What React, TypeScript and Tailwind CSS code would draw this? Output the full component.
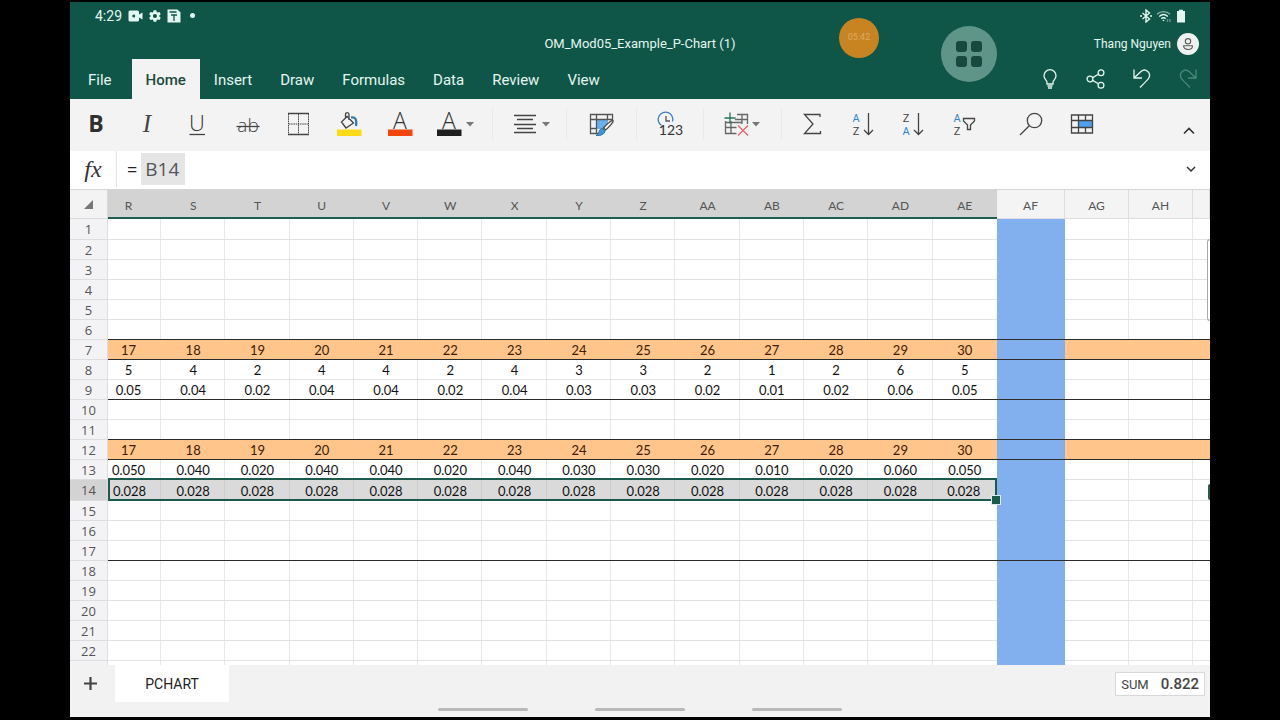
import type { ReactNode } from "react";
import { useState } from "react";

const TABS = ["File", "Home", "Insert", "Draw", "Formulas", "Data", "Review", "View"];

const COLUMNS = [
  "R", "S", "T", "U", "V", "W", "X", "Y", "Z",
  "AA", "AB", "AC", "AD", "AE", "AF", "AG", "AH", "",
];

const ROWS = Array.from({ length: 22 }, (_, i) => i + 1);

const SAMPLES = ["17", "18", "19", "20", "21", "22", "23", "24", "25", "26", "27", "28", "29", "30"];

const DATA: Record<number, string[]> = {
  7: SAMPLES,
  8: ["5", "4", "2", "4", "4", "2", "4", "3", "3", "2", "1", "2", "6", "5"],
  9: ["0.05", "0.04", "0.02", "0.04", "0.04", "0.02", "0.04", "0.03", "0.03", "0.02", "0.01", "0.02", "0.06", "0.05"],
  12: SAMPLES,
  13: ["0.050", "0.040", "0.020", "0.040", "0.040", "0.020", "0.040", "0.030", "0.030", "0.020", "0.010", "0.020", "0.060", "0.050"],
  14: SAMPLES.map(() => "0.028"),
};

const LAST_SELECTED = 13;
const BLUE_COL = 14;
const ACTIVE_ROW = 14;
const RULED_ROWS = [6, 7, 9, 11, 12, 17];
const BANDED_ROWS = [7, 12];
const TALL_ROWS = [1, 14];

function cellClass(row: number, col: number) {
  const selected = col <= LAST_SELECTED;
  const banded = BANDED_ROWS.includes(row);
  const inSelection = row === ACTIVE_ROW && selected;
  const classes = ["relative text-center"];

  if (col === BLUE_COL) classes.push("bg-[#82afed]");
  else if (banded) classes.push("bg-[#ffc58b] text-[#3d1a00]");
  else if (inSelection) classes.push("bg-[#dadada]");
  else classes.push("bg-white");

  if (selected && (row === ACTIVE_ROW || row === ACTIVE_ROW - 1)) {
    classes.push("border-b-2 border-b-[#1b5a4c] pt-0.5");
  } else if (RULED_ROWS.includes(row)) classes.push("border-b border-b-[#2b2b2b]");
  else if (col === BLUE_COL) classes.push("border-b border-b-[#82afed]");
  else classes.push("border-b border-b-[#e2e2e4]");

  // vertical grid lines are shadows so that they never notch the row rules
  const lastBeforeBlue = col === BLUE_COL - 1;
  if (inSelection && !lastBeforeBlue) classes.push("shadow-[inset_-1px_0_0_#cdcdcf]");
  else if (!banded && !lastBeforeBlue && col !== BLUE_COL && col < 17) classes.push("shadow-[inset_-1px_0_0_#e8e8ea]");

  if (row === ACTIVE_ROW && col === 0) classes.push("border-l-2 border-l-[#1b5a4c]");
  if (row === ACTIVE_ROW && lastBeforeBlue) classes.push("border-r-2 border-r-[#1b5a4c]");

  classes.push(col === 0 ? "pr-3" : "");
  return classes.join(" ");
}

function Icon({ children, className = "h-6 w-6" }: { children: ReactNode; className?: string }) {
  return (
    <svg
      viewBox="0 0 24 24"
      className={`${className} shrink-0 overflow-visible`}
      fill="none"
      stroke="currentColor"
      strokeWidth="1.3"
      aria-hidden="true"
    >
      {children}
    </svg>
  );
}

function Caret() {
  return (
    <svg viewBox="0 0 8 5" className="h-[5px] w-2 shrink-0" fill="#777" aria-hidden="true">
      <path d="M0 0h8L4 4.6z" />
    </svg>
  );
}

function Tool({ label, children }: { label: string; children: ReactNode }) {
  return (
    <button type="button" aria-label={label} className="flex h-full w-full items-center justify-center">
      {children}
    </button>
  );
}

function Letter({ x, y, size, color, weight = 400, family = "'Open Sans', 'Noto Sans', sans-serif", children }: {
  x: number; y: number; size: number; color: string; weight?: number; family?: string; children: string;
}) {
  return (
    <text
      x={x}
      y={y}
      fontSize={size}
      fontWeight={weight}
      fill={color}
      stroke="none"
      textAnchor="middle"
      fontFamily={family}
    >
      {children}
    </text>
  );
}

function SortLetters({ top, bottom }: { top: string; bottom: string }) {
  return (
    <>
      <Letter x={5} y={9.5} size={11} color={top === "A" ? "#2f86c9" : "#444"} family="Roboto, sans-serif">{top}</Letter>
      <Letter x={5} y={22.5} size={11} color={bottom === "A" ? "#2f86c9" : "#444"} family="Roboto, sans-serif">{bottom}</Letter>
    </>
  );
}

function StatusBar() {
  return (
    <div className="flex h-[27px] items-center justify-between pl-[25px] pr-6 text-[#e3f6ef]">
      <div className="flex items-center gap-[5px]">
        <span className="text-sm">4:29</span>
        <svg viewBox="0 0 15 12" className="ml-px h-3 w-[15px]" aria-hidden="true">
          <path fill="currentColor" fillRule="evenodd" d="M2 .5h7.500A1.500 1.500 0 0 1 11 2v2.500L14.500 2.500v7L11 7.500V10a1.500 1.500 0 0 1-1.500 1.500H2A1.500 1.500 0 0 1 .5 10V2A1.500 1.500 0 0 1 2 .5zm3.700 4a1.500 1.500 0 1 0 .01 3 1.500 1.500 0 0 0-.01-3z" />
        </svg>
        <svg viewBox="0 0 24 24" className="h-[14px] w-[14px]" fill="currentColor" aria-hidden="true">
          <path fillRule="evenodd" d="M19.400 13c.1-.7.1-1.300 0-2l2.100-1.600c.2-.2.3-.4.1-.7l-2-3.400c-.1-.2-.4-.3-.6-.2l-2.500 1c-.5-.4-1.100-.7-1.700-1L14.400 2.400c0-.2-.2-.4-.5-.4h-4c-.2 0-.4.2-.5.4L9 5.100c-.6.2-1.200.6-1.700 1l-2.500-1c-.2-.1-.5 0-.6.2l-2 3.400c-.1.2-.1.5.1.7L4.400 11c-.1.7-.1 1.300 0 2l-2.100 1.600c-.2.2-.2.4-.1.7l2 3.400c.1.2.4.3.6.2l2.500-1c.5.4 1.100.7 1.700 1l.4 2.700c.1.2.3.4.5.4h4c.3 0 .5-.2.5-.4l.4-2.700c.6-.2 1.200-.6 1.700-1l2.500 1c.2.1.5 0 .6-.2l2-3.400c.1-.2.1-.5-.1-.7zM11.900 15.600a3.600 3.600 0 1 1 0-7.200 3.600 3.600 0 0 1 0 7.200z" />
        </svg>
        <svg viewBox="0 0 14 14" className="h-[14px] w-[14px]" aria-hidden="true">
          <path fill="currentColor" d="M.5.5h10l3 3v10H.5z" />
          <path stroke="#0f5648" strokeWidth="1.300" fill="none" d="M2.500 3h7M7 6v6M4 6h6" />
        </svg>
        <span className="ml-1 h-[5px] w-[5px] rounded-full bg-current" />
      </div>
      <div className="flex items-center gap-1">
        <svg viewBox="0 0 12 14" className="h-[14px] w-3" fill="none" stroke="currentColor" strokeWidth="1.400" aria-hidden="true">
          <path d="M2.500 4l7 6L6 13V1l3.500 3-7 6" />
          <path d="M0 7h2M10 7h2" />
        </svg>
        <svg viewBox="0 0 16 14" className="h-[14px] w-4" fill="none" stroke="currentColor" strokeWidth="1.400" aria-hidden="true">
          <path opacity=".6" d="M1 5.200c3.800-3.500 9.200-3.500 13 0" />
          <path d="M3.200 7.400c2.600-2.300 6-2.300 8.600 0M5.300 9.600c1.400-1.200 3-1.200 4.400 0" />
          <circle cx="7.500" cy="11.500" r=".8" fill="currentColor" stroke="none" />
          <path opacity=".4" d="M11.500 10v3M14 10v3" />
        </svg>
        <svg viewBox="0 0 10 14" className="h-[14px] w-[10px]" fill="currentColor" aria-hidden="true">
          <path d="M3 .8h4V2h2v11.500H1V2h2z" />
        </svg>
      </div>
    </div>
  );
}

function Header() {
  const [active, setActive] = useState("Home");
  return (
    <header className="relative bg-[#0f5648] text-[#e3f6ef]">
      <StatusBar />
      <div className="grid h-[30px] grid-cols-[1fr_auto_1fr] items-center">
        <span />
        <h1 className="text-[13px]">OM_Mod05_Example_P-Chart (1)</h1>
        <button type="button" className="mr-[11px] flex items-center gap-[6px] justify-self-end text-xs">
          Thang Nguyen
          <span className="flex h-[22px] w-[22px] items-center justify-center rounded-full bg-[#eef1ef] text-[#5c5c5c]">
            <svg viewBox="0 0 14 14" className="h-[14px] w-[14px]" fill="none" stroke="currentColor" strokeWidth="1.100" aria-hidden="true">
              <circle cx="7" cy="4.300" r="2.700" />
              <path d="M2.500 8.700h9c0 5-9 5-9 0z" strokeLinejoin="round" />
            </svg>
          </span>
        </button>
      </div>
      <div className="flex h-10 items-stretch justify-between pl-1">
        <nav className="flex text-[15px]">
          {TABS.map((tab) => (
            <button
              key={tab}
              type="button"
              onClick={() => setActive(tab)}
              className={`px-[14px] pt-0.5 first:mr-[6px] ${tab === active ? "bg-[#f3f3f3] font-medium text-[#1c4a3e]" : ""}`}
            >
              {tab}
            </button>
          ))}
        </nav>
        <div className="flex items-center gap-[22px] pr-[10px]">
          <button type="button" aria-label="Tell me">
            <Icon>
              <path d="M9 17v-1.500C9 13 6 12.500 6 8.700a6 6 0 0 1 12 0c0 3.800-3 4.300-3 6.800V17zM9.500 19h5M10 21h4" />
            </Icon>
          </button>
          <button type="button" aria-label="Share">
            <Icon>
              <circle cx="6" cy="12" r="2.900" />
              <circle cx="17" cy="5.800" r="2.900" />
              <circle cx="17" cy="18.200" r="2.900" />
              <path d="M8.600 10.600l5.800-3.300M8.600 13.400l5.800 3.300" />
            </Icon>
          </button>
          <button type="button" aria-label="Undo">
            <Icon>
              <path d="M4 2.500v8.500h8M4 11l7-6.500c4.500-4 11 1.500 7.500 7C17.500 13 14 16.500 10 20.500" />
            </Icon>
          </button>
          <button type="button" aria-label="Redo" className="text-[#4c897b]">
            <Icon>
              <path d="M20 2.500v8.500h-8M20 11l-7-6.500c-4.500-4-11 1.500-7.500 7C6.500 13 10 16.500 14 20.500" />
            </Icon>
          </button>
        </div>
      </div>
      {/* floating recorder timer and quick menu bubbles */}
      <span className="absolute right-[331px] top-4 flex h-10 w-10 items-center justify-center rounded-full bg-[#c88420] text-[9px] text-[#deaa62]">
        05:42
      </span>
      <button
        type="button"
        aria-label="Quick menu"
        className="absolute right-[213px] top-6 grid h-14 w-14 grid-cols-2 place-content-center gap-1 rounded-full bg-[#5f9488] px-[15px]"
      >
        <span className="h-[11px] rounded-[3px] bg-[#17493e]" />
        <span className="h-[11px] rounded-[3px] bg-[#17493e]" />
        <span className="h-[11px] rounded-[3px] bg-[#17493e]" />
        <span className="h-[11px] rounded-[3px] bg-[#17493e]" />
      </button>
    </header>
  );
}

function Separator() {
  return <span className="h-8 w-px shrink-0 bg-[#e9e9e9]" />;
}

function Ribbon() {
  return (
    <div className="flex h-[52px] shrink-0 items-center bg-[#f3f3f3] pb-0.5 pl-px text-[#444]">
      <div className="grid h-full w-[354px] grid-cols-7">
        <Tool label="Bold">
          <Icon><Letter x={12} y={20} size={23} color="#2f2f2f" weight={700}>B</Letter></Icon>
        </Tool>
        <Tool label="Italic">
          <span className="font-['Liberation_Serif',serif] text-[25px] italic leading-6">I</span>
        </Tool>
        <Tool label="Underline">
          <Icon>
            <Letter x={12} y={19} size={22} color="#333" weight={300}>U</Letter>
            <path d="M4.500 22.500h15.500" />
          </Icon>
        </Tool>
        <Tool label="Strikethrough">
          <Icon>
            <Letter x={12} y={20} size={19} color="#444" weight={300}>ab</Letter>
            <path d="M.5 14.500h23" />
          </Icon>
        </Tool>
        <Tool label="Borders">
          <Icon>
            <path d="M1 1.500h21M1 22.500h21" />
            <path d="M1.500 2v20M21.500 2v20M2 12h20M11.500 2v20" strokeDasharray="1.500 .7" strokeWidth="1" />
          </Icon>
        </Tool>
        <Tool label="Fill colour">
          <Icon>
            <path d="M9.500 5L4.500 10l4.500 6 7.500-5L10 4.500zM8.500 6V2.500c0-2.500 3.500-2.500 3.500 0V8" />
            <path d="M14 5.500c4.500-1 6 2 5 8.500" stroke="#2f78b8" strokeWidth="2.200" />
            <path d="M0 17.500h24.500v6.500H0z" fill="#fcdb16" stroke="none" />
          </Icon>
        </Tool>
        <Tool label="Font colour">
          <Icon>
            <Letter x={12} y={16.5} size={23} color="#333" weight={300}>A</Letter>
            <path d="M0 17.500h24.500v6.500H0z" fill="#f2460d" stroke="none" />
          </Icon>
        </Tool>
      </div>
      <button type="button" aria-label="Font" className="flex h-full w-[67px] items-center gap-[5px] pl-3">
        <Icon>
          <Letter x={12} y={16.5} size={23} color="#333" weight={300}>A</Letter>
          <path d="M0 17.500h24.500v6.500H0z" fill="#1f1f1f" stroke="none" />
        </Icon>
        <Caret />
      </button>
      <Separator />
      <button type="button" aria-label="Alignment" className="flex h-full w-[73px] items-center gap-[5px] pl-5">
        <Icon>
          <path d="M1 3.500h22M4 7.500h16M1 12.500h22M4 16.500h16M1 20.500h22" />
        </Icon>
        <Caret />
      </button>
      <Separator />
      <div className="h-full w-[69px]">
        <Tool label="Cell styles">
          <Icon>
            <path d="M6.500 7h11.500v10H6.500z" fill="#69b1ee" stroke="none" />
            <path d="M9 21.500H.5V2.500h22V8M.5 7.500h22M6.500 2.500v19M17.500 2.500v5M.5 16.500h6" stroke="#555" />
            <path d="M23 8.500c1.500 1-5.500 8-7.500 9.500l-2-2C15 14 21.500 7.500 23 8.500z" fill="#f3f3f3" />
            <path d="M12.500 16.500l2.500 2.300c0 3-4 5.200-9 4.700 3.500-1.500 2.500-7 6.500-7z" fill="#3f93df" stroke="#2a6fae" strokeWidth="1" />
          </Icon>
        </Tool>
      </div>
      <Separator />
      <div className="h-full w-[66px]">
        <Tool label="Number format">
          <Icon>
            <path d="M3.500 13.500A7.300 7.300 0 1 1 14.500 9.500" stroke="#3f7fc0" />
            <path d="M8 4v5h4" stroke="#555" />
            <Letter x={13} y={23} size={14} color="#333" family="Lato, sans-serif">123</Letter>
          </Icon>
        </Tool>
      </div>
      <Separator />
      <button type="button" aria-label="Insert and delete cells" className="flex h-full w-[77px] items-center gap-1 pl-5">
        <Icon>
          <path d="M13 2.500h10.500V12M11 7.500h12.500M18 2.500V12M12.500 21.500H1.500V9M1.500 15.500h11M7 9v12.500M1.500 10.500h16.500" stroke="#666" />
          <path d="M6 .5v11M.5 6h11" stroke="#25765c" />
          <path d="M14 13.500l10 10M24 13.500l-10 10" stroke="#e5646c" />
        </Icon>
        <Caret />
      </button>
      <Separator />
      <div className="ml-[5px] grid h-full w-[202px] grid-cols-4">
        <Tool label="AutoSum">
          <Icon>
            <path d="M20 5V2.500H4.500L13 12l-8.500 9.500H20.500V19" />
          </Icon>
        </Tool>
        <Tool label="Sort ascending">
          <Icon>
            <SortLetters top="A" bottom="Z" />
            <path d="M17.500 1v21.500M13 18l4.500 4.500L22 18" />
          </Icon>
        </Tool>
        <Tool label="Sort descending">
          <Icon>
            <SortLetters top="Z" bottom="A" />
            <path d="M17.500 1v21.500M13 18l4.500 4.500L22 18" />
          </Icon>
        </Tool>
        <Tool label="Filter">
          <Icon>
            <SortLetters top="A" bottom="Z" />
            <path d="M11.500 6.500h11V9l-4 4v4.500h-3V13l-4-4z" />
          </Icon>
        </Tool>
      </div>
      <span className="ml-[7px]"><Separator /></span>
      <div className="ml-[10px] grid h-full w-[101px] grid-cols-2">
        <Tool label="Find">
          <Icon>
            <circle cx="15.500" cy="8.500" r="7.200" />
            <path d="M10.300 13.700L1 23" />
          </Icon>
        </Tool>
        <Tool label="Format as table">
          <Icon>
            <path d="M8.500 8.500h14v7h-14z" fill="#4f9fee" stroke="none" />
            <path d="M1.500 3h21v18h-21zM1.500 8.500h21M1.500 15.500h21M8.500 3v18M15.500 3v5.500M15.500 15.500V21" />
          </Icon>
        </Tool>
      </div>
      <button type="button" aria-label="Collapse ribbon" className="ml-auto mr-[15px] pt-[13px]">
        <svg viewBox="0 0 12 8" className="h-2 w-3" fill="none" stroke="#333" strokeWidth="1.600" aria-hidden="true">
          <path d="M1 6.500l5-5 5 5" />
        </svg>
      </button>
    </div>
  );
}

function FormulaBar() {
  return (
    <div className="flex h-[39px] shrink-0 items-center border-b border-[#d5d5d5] bg-white pb-0.5">
      <span className="flex h-full w-[47px] items-center justify-center border-r border-[#e3e3e3] font-['Liberation_Serif',serif] text-2xl italic text-[#333]">
        fx
      </span>
      <label htmlFor="formula" className="pl-[10px] font-['Open_Sans','Noto_Sans',sans-serif] text-lg text-[#222]">
        =
      </label>
      <input
        id="formula"
        defaultValue="B14"
        className="ml-1 h-8 w-11 bg-[#e5e5e6] px-1 font-['Open_Sans','Noto_Sans',sans-serif] text-[19px] text-[#555] outline-none"
      />
      <button type="button" aria-label="Expand formula bar" className="ml-auto mr-[14px]">
        <svg viewBox="0 0 10 7" className="h-[7px] w-[10px]" fill="none" stroke="#333" strokeWidth="1.500" aria-hidden="true">
          <path d="M1 1l4 4 4-4" />
        </svg>
      </button>
    </div>
  );
}

function Sheet() {
  return (
    <main className="relative min-h-0 flex-1 overflow-hidden bg-white">
      <table className="w-full table-fixed border-separate border-spacing-0 font-[Lato,sans-serif] text-[13px] leading-4 text-[#111]">
        <colgroup>
          <col className="w-[38px]" />
          {COLUMNS.map((name, i) => (
            <col
              key={i}
              className={i === 0 ? "w-[53px]" : i < BLUE_COL ? "" : i === BLUE_COL ? "w-[68px]" : name ? "w-16" : "w-[17px]"}
            />
          ))}
        </colgroup>
        <thead>
          <tr className="h-[29px] text-xs text-[#555]">
            <th aria-label="Select all" className="border-b border-r border-[#d9d9d9] bg-[#f3f3f4] p-0">
              <svg viewBox="0 0 9 9" className="ml-[14px] h-[9px] w-[9px]" fill="#777" aria-hidden="true">
                <path d="M9 0v9H0z" />
              </svg>
            </th>
            {COLUMNS.map((name, i) => (
              <th
                key={i}
                scope="col"
                className={`p-0 pt-1 font-normal ${
                  i <= LAST_SELECTED
                    ? "border-b-2 border-[#1f5f51] bg-[#d3d3d4]"
                    : "border-b border-r border-[#dddde0] bg-[#f4f4f5]"
                } ${i === 0 ? "pr-3" : ""}`}
              >
                {name}
              </th>
            ))}
          </tr>
        </thead>
        <tbody>
          {ROWS.map((row) => (
            <tr key={row} className={TALL_ROWS.includes(row) ? "h-[21px]" : "h-5"}>
              <th
                scope="row"
                className={`border-b border-r border-[#dddde0] p-0 font-['Open_Sans','Noto_Sans',sans-serif] font-normal text-[#555] ${
                  row === ACTIVE_ROW ? "bg-[#d3d3d4]" : "bg-[#f3f3f5]"
                }`}
              >
                {row}
              </th>
              {COLUMNS.map((_, col) => (
                <td key={col} className={cellClass(row, col)}>
                  {DATA[row]?.[col]}
                  {row === ACTIVE_ROW && col === LAST_SELECTED && (
                    <span className="absolute -bottom-[6px] -right-[6px] z-10 h-[10px] w-[10px] border border-[#dfe9f5] bg-[#1b5a4c]" />
                  )}
                </td>
              ))}
            </tr>
          ))}
          <tr className="h-5">
            <th className="border-r border-[#dddde0] bg-[#f3f3f5] p-0" />
            {COLUMNS.map((_, col) => (
              <td key={col} className={cellClass(23, col)} />
            ))}
          </tr>
        </tbody>
      </table>
      {/* scroll thumb and the selection marker at the right edge */}
      <span className="absolute right-0 top-[49px] h-[82px] w-[3px] rounded-l border border-r-0 border-[#a8a8b0] bg-white" />
      <span className="absolute right-0 top-[294px] h-4 w-0.5 rounded-l bg-[#2b5a50]" />
    </main>
  );
}

function Footer() {
  return (
    <footer className="shrink-0 bg-[#f2f2f3]">
      <div className="flex h-[37px] items-center pr-[5px]">
        <button type="button" aria-label="Add sheet" className="flex h-full w-[45px] items-center pl-[14px]">
          <svg viewBox="0 0 13 13" className="h-[13px] w-[13px]" stroke="#444" strokeWidth="2.200" aria-hidden="true">
            <path d="M6.500 0v13M0 6.500h13" />
          </svg>
        </button>
        <button type="button" className="h-full w-[114px] bg-white text-sm text-[#222]">
          PCHART
        </button>
        <button
          type="button"
          className="ml-auto flex h-6 items-center gap-3 border border-[#d8d8d8] bg-white px-[5px] pt-0.5 text-[#444]"
        >
          <span className="text-[13px]">SUM</span>
          <span className="text-[15px] font-medium">0.822</span>
        </button>
      </div>
      <div className="flex h-[15px] items-center justify-center gap-[67px]">
        <span className="h-[3px] w-[90px] rounded-full bg-[#b9b9ba]" />
        <span className="h-[3px] w-[90px] rounded-full bg-[#b9b9ba]" />
        <span className="h-[3px] w-[90px] rounded-full bg-[#b9b9ba]" />
      </div>
    </footer>
  );
}

export default function App() {
  return (
    <div className="h-screen bg-black px-[70px] pb-[3px] pt-[2px] font-[Roboto,sans-serif]">
      <div className="flex h-full flex-col">
        <Header />
        <Ribbon />
        <FormulaBar />
        <Sheet />
        <Footer />
      </div>
    </div>
  );
}
